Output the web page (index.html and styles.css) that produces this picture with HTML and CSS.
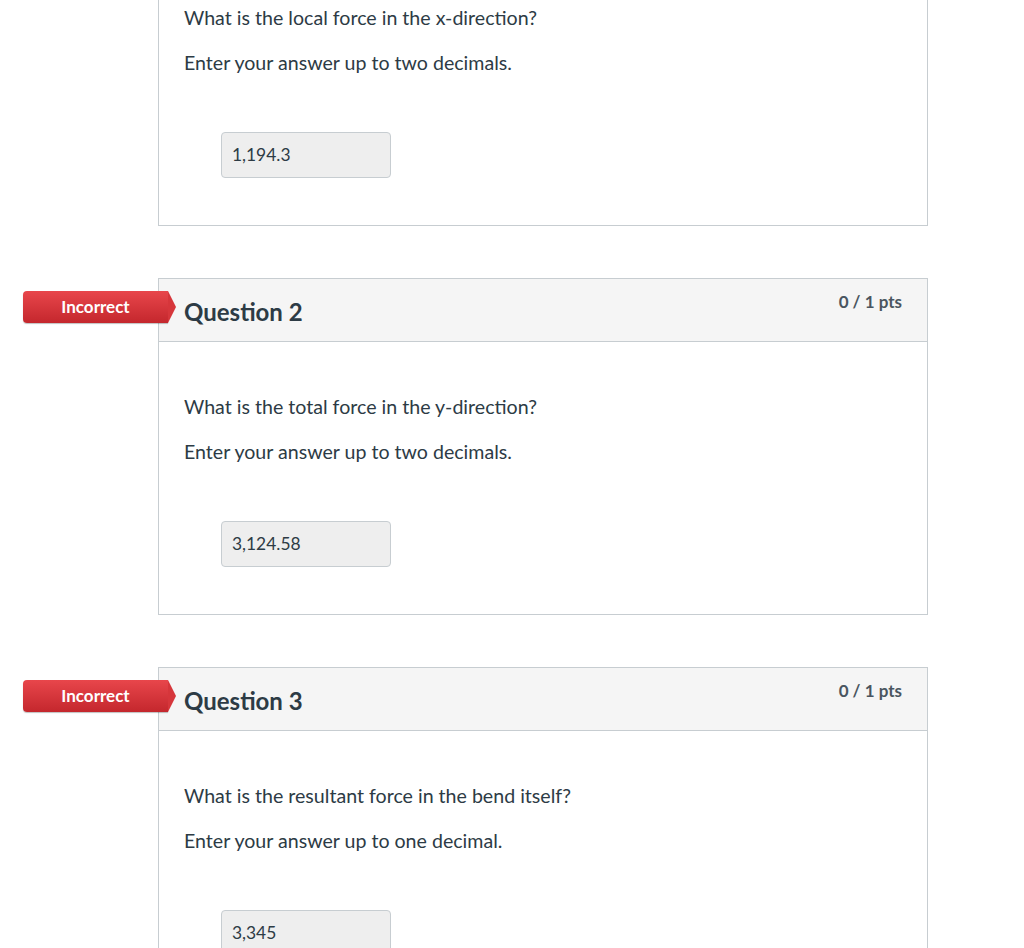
FILE: index.html
```html
<!DOCTYPE html>
<html>
<head>
<meta charset="utf-8">
<link rel="stylesheet" href="styles.css">
</head>
<body>
<div class="quiz">
  <div class="question first">
    <div class="q-body">
      <p>What is the local force in the x-direction?</p>
      <p>Enter your answer up to two decimals.</p>
      <div class="answer">1,194.3</div>
    </div>
  </div>

  <div class="question">
    <div class="badge">Incorrect</div>
    <div class="q-header">
      <h2 class="q-title">Question 2</h2>
      <div class="q-pts">0 / 1 pts</div>
    </div>
    <div class="q-body">
      <p>What is the total force in the y-direction?</p>
      <p>Enter your answer up to two decimals.</p>
      <div class="answer">3,124.58</div>
    </div>
  </div>

  <div class="question">
    <div class="badge">Incorrect</div>
    <div class="q-header">
      <h2 class="q-title">Question 3</h2>
      <div class="q-pts">0 / 1 pts</div>
    </div>
    <div class="q-body">
      <p>What is the resultant force in the bend itself?</p>
      <p>Enter your answer up to one decimal.</p>
      <div class="answer">3,345</div>
    </div>
  </div>
</div>
</body>
</html>
```

FILE: styles.css
```css
html, body {
  margin: 0;
  padding: 0;
  background: #ffffff;
  overflow: hidden;
}
body {
  font-family: Lato, "Open Sans", "Liberation Sans", sans-serif;
  color: #2d3b45;
}
.quiz {
  padding-left: 158px;
  width: 770px;
  display: flex;
  flex-direction: column;
  gap: 52px;
}
.question {
  position: relative;
  border: 1px solid #c7cdd1;
  background: #fff;
}
.question.first {
  margin-top: -48px;
}
.q-header {
  height: 62px;
  background: #f5f5f5;
  border-bottom: 1px solid #c7cdd1;
  display: flex;
  justify-content: space-between;
  align-items: flex-start;
  padding: 0 25px 0 25px;
}
.q-title {
  margin: 18px 0 0;
  font-size: 24px;
  font-weight: 700;
  line-height: 30px;
  color: #2d3b45;
}
.q-pts {
  margin-top: 11px;
  font-size: 17px;
  font-weight: 700;
  line-height: 24px;
  color: #4a5560;
}
.q-body {
  padding: 51px 25px 47px;
}
.q-body p {
  margin: 0 0 18px;
  font-size: 19.6px;
  line-height: 27px;
}
.answer {
  margin: 56px 0 0 37px;
  height: 44px;
  border: 1px solid #c7cdd1;
  border-radius: 4px;
  background: #eeeeee;
  font-size: 17.4px;
  line-height: 44px;
  padding-left: 10px;
  width: 158px;
  color: #2d3b45;
}
.badge {
  position: absolute;
  left: -136px;
  top: 12px;
  width: 145px;
  height: 32px;
  border-radius: 4px 0 0 4px;
  background: linear-gradient(#e8464b, #c4272d);
  box-shadow: 0 1px 1px rgba(0, 0, 0, 0.25);
  color: #fff;
  font-size: 17px;
  font-weight: 700;
  line-height: 32px;
  text-align: center;
}
.badge::after {
  content: "";
  position: absolute;
  right: -8px;
  top: 0;
  width: 0;
  height: 0;
  border-top: 16px solid transparent;
  border-bottom: 16px solid transparent;
  border-left: 8px solid #d6363b;
}
```
